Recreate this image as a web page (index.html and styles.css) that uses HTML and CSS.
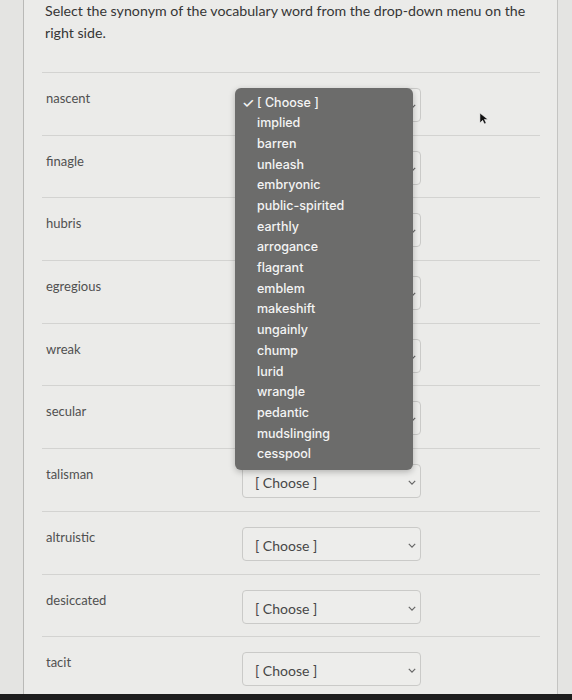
FILE: index.html
```html
<!DOCTYPE html>
<html>
<head>
<meta charset="utf-8">
<link rel="stylesheet" href="styles.css">
</head>
<body>
<div class="page">
  <div class="card">
    <p class="prompt">Select the synonym of the vocabulary word from the drop-down menu on the right side.</p>
    <div class="rows">
      <div class="row"><span class="word">nascent</span><div class="select"><span>[ Choose ]</span><svg class="chev" viewBox="0 0 10 6"><path d="M1 1l4 4 4-4"/></svg></div></div>
      <div class="row"><span class="word">finagle</span><div class="select"><span>[ Choose ]</span><svg class="chev" viewBox="0 0 10 6"><path d="M1 1l4 4 4-4"/></svg></div></div>
      <div class="row"><span class="word">hubris</span><div class="select"><span>[ Choose ]</span><svg class="chev" viewBox="0 0 10 6"><path d="M1 1l4 4 4-4"/></svg></div></div>
      <div class="row"><span class="word">egregious</span><div class="select"><span>[ Choose ]</span><svg class="chev" viewBox="0 0 10 6"><path d="M1 1l4 4 4-4"/></svg></div></div>
      <div class="row"><span class="word">wreak</span><div class="select"><span>[ Choose ]</span><svg class="chev" viewBox="0 0 10 6"><path d="M1 1l4 4 4-4"/></svg></div></div>
      <div class="row"><span class="word">secular</span><div class="select"><span>[ Choose ]</span><svg class="chev" viewBox="0 0 10 6"><path d="M1 1l4 4 4-4"/></svg></div></div>
      <div class="row"><span class="word">talisman</span><div class="select"><span>[ Choose ]</span><svg class="chev" viewBox="0 0 10 6"><path d="M1 1l4 4 4-4"/></svg></div></div>
      <div class="row"><span class="word">altruistic</span><div class="select"><span>[ Choose ]</span><svg class="chev" viewBox="0 0 10 6"><path d="M1 1l4 4 4-4"/></svg></div></div>
      <div class="row"><span class="word">desiccated</span><div class="select"><span>[ Choose ]</span><svg class="chev" viewBox="0 0 10 6"><path d="M1 1l4 4 4-4"/></svg></div></div>
      <div class="row"><span class="word">tacit</span><div class="select"><span>[ Choose ]</span><svg class="chev" viewBox="0 0 10 6"><path d="M1 1l4 4 4-4"/></svg></div></div>
    </div>
  </div>
  <ul class="menu">
    <li class="checked"><span class="check">✓</span>[ Choose ]</li>
    <li>implied</li>
    <li>barren</li>
    <li>unleash</li>
    <li>embryonic</li>
    <li>public-spirited</li>
    <li>earthly</li>
    <li>arrogance</li>
    <li>flagrant</li>
    <li>emblem</li>
    <li>makeshift</li>
    <li>ungainly</li>
    <li>chump</li>
    <li>lurid</li>
    <li>wrangle</li>
    <li>pedantic</li>
    <li>mudslinging</li>
    <li>cesspool</li>
  </ul>
  <svg class="cursor" viewBox="0 0 10 14"><path d="M1 1v11l3-3 2 4 2-1-2-4h4z"/></svg>
  <div class="bottom-bar"></div>
</div>
</body>
</html>
```
FILE: styles.css
```css
html, body {
  margin: 0;
  padding: 0;
}
body {
  background: #e4e4e2;
  font-family: Lato, "Liberation Sans", sans-serif;
}
.page {
  position: relative;
  width: 572px;
  height: 700px;
  overflow: hidden;
  background: #e4e4e2;
}
.card {
  margin-left: 23px;
  width: 535px;
  height: 694px;
  box-sizing: border-box;
  border-left: 1px solid #b9b9b7;
  border-right: 1px solid #c4c4c2;
  background: #ebebe9;
  padding: 0 0 0 21px;
}
.prompt {
  margin: 0 0 28px 0;
  width: 500px;
  font-size: 14.2px;
  line-height: 22px;
  color: #363636;
}
.rows {
  margin-left: -3px;
  width: 498px;
  border-top: 1px solid #d3d3d1;
}
.row {
  height: 62.7px;
  box-sizing: border-box;
  border-bottom: 1px solid #d3d3d1;
  display: grid;
  grid-template-columns: 200px 179px;
  align-items: start;
}
.word {
  padding: 17px 0 0 4px;
  font-size: 13px;
  line-height: 17px;
  color: #505050;
}
.select {
  margin-top: 15px;
  height: 34px;
  box-sizing: border-box;
  border: 1px solid #cacac8;
  border-radius: 4px;
  background: #ededeb;
  display: flex;
  align-items: center;
  justify-content: space-between;
  padding: 3px 4px 0 12px;
  font-size: 14px;
  color: #474747;
}
.chev {
  width: 8px;
  height: 5px;
  fill: none;
  stroke: #666;
  stroke-width: 1.5;
}
.menu {
  position: absolute;
  left: 235px;
  top: 88px;
  width: 178px;
  height: 382px;
  box-sizing: border-box;
  margin: 0;
  padding: 4.6px 0;
  list-style: none;
  background: #6c6c6b;
  border-radius: 6px;
  box-shadow: 0 2px 6px rgba(0,0,0,0.25);
  font-family: Inter, "Noto Sans", sans-serif;
  font-weight: 500;
  font-size: 12.5px;
  color: #f4f4f4;
}
.menu li {
  height: 20.7px;
  line-height: 20.7px;
  padding-left: 22px;
  position: relative;
}
.check {
  position: absolute;
  left: 7px;
  top: 0;
  font-size: 14px;
}
.cursor {
  position: absolute;
  left: 479px;
  top: 112px;
  width: 9px;
  height: 13px;
  fill: #111;
  stroke: #fff;
  stroke-width: 0.6;
}
.bottom-bar {
  position: absolute;
  left: 0;
  bottom: 0;
  width: 572px;
  height: 6px;
  background: #1e1e1e;
}
```
